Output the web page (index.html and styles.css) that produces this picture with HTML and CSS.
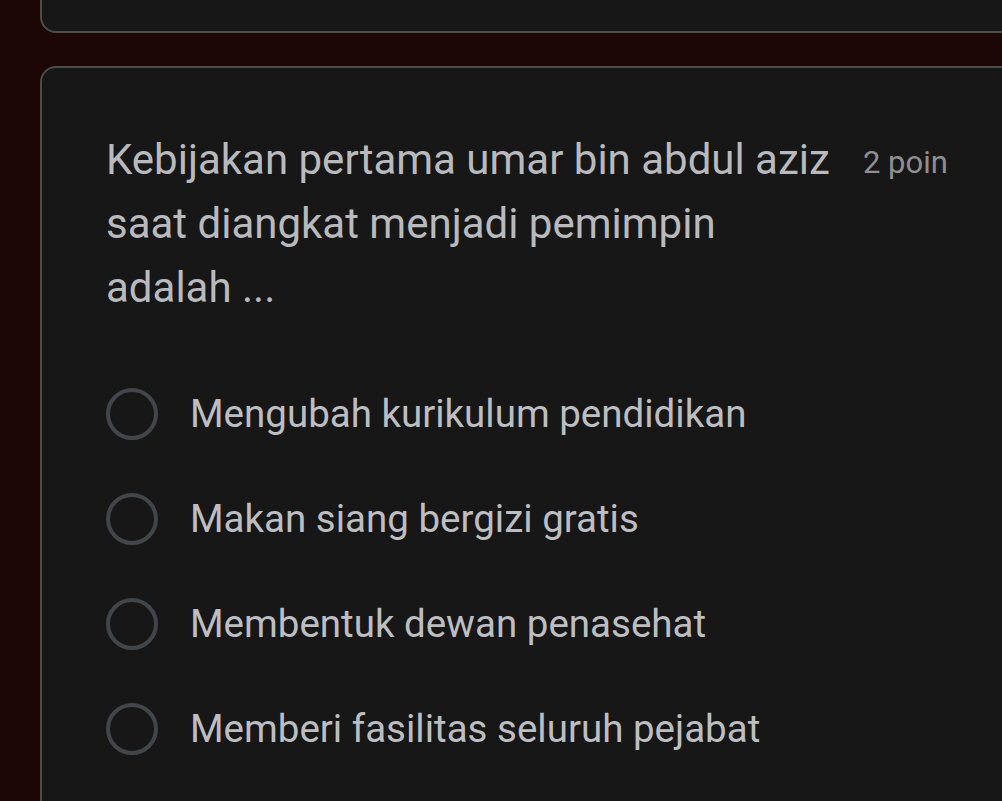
FILE: index.html
```html
<!DOCTYPE html>
<html lang="id">
<head>
    <meta charset="UTF-8">
    <meta name="viewport" content="width=device-width, initial-scale=1.0">
    <title>Kuis</title>
    <link rel="stylesheet" href="styles.css">
</head>
<body>
    <div class="page">
        <div class="card card-prev"></div>

        <div class="card">
            <div class="question-head">
                <div class="question">Kebijakan pertama umar bin abdul aziz saat diangkat menjadi pemimpin adalah ...</div>
                <div class="points">2 poin</div>
            </div>
            <div class="options">
                <label class="option"><span class="radio"></span>Mengubah kurikulum pendidikan</label>
                <label class="option"><span class="radio"></span>Makan siang bergizi gratis</label>
                <label class="option"><span class="radio"></span>Membentuk dewan penasehat</label>
                <label class="option"><span class="radio"></span>Memberi fasilitas seluruh pejabat</label>
            </div>
        </div>
    </div>
</body>
</html>
```

FILE: styles.css
```css
html, body {
    margin: 0;
    height: 100%;
    overflow: hidden;
}
body {
    background-color: #1c0606;
    font-family: Roboto, "Noto Sans", Arial, sans-serif;
}
.page {
    display: flex;
    flex-direction: column;
    gap: 33px;
    padding-left: 40px;
    width: 1000px;
    margin-top: -96px;
}
.card {
    background-color: #171717;
    border: 2px solid #4c4c4c;
    border-radius: 16px;
    padding: 60px 0 64px 64px;
}
.card-prev {
    padding: 0;
    height: 129px;
    box-sizing: border-box;
}
.question-head {
    display: flex;
    align-items: flex-start;
}
.question {
    width: 740px;
    color: #b9babe;
    font-size: 42px;
    line-height: 64px;
}
.points {
    margin-left: 17px;
    margin-top: 10px;
    color: #8f8f91;
    font-size: 31px;
    line-height: 50px;
}
.options {
    display: flex;
    flex-direction: column;
    gap: 53px;
    margin-top: 68px;
}
.option {
    display: flex;
    align-items: center;
    color: #bdbec2;
    font-size: 38.5px;
    line-height: 50px;
}
.radio {
    width: 44px;
    height: 44px;
    border: 4px solid #42454a;
    border-radius: 50%;
    margin-right: 32px;
    flex-shrink: 0;
}
```
